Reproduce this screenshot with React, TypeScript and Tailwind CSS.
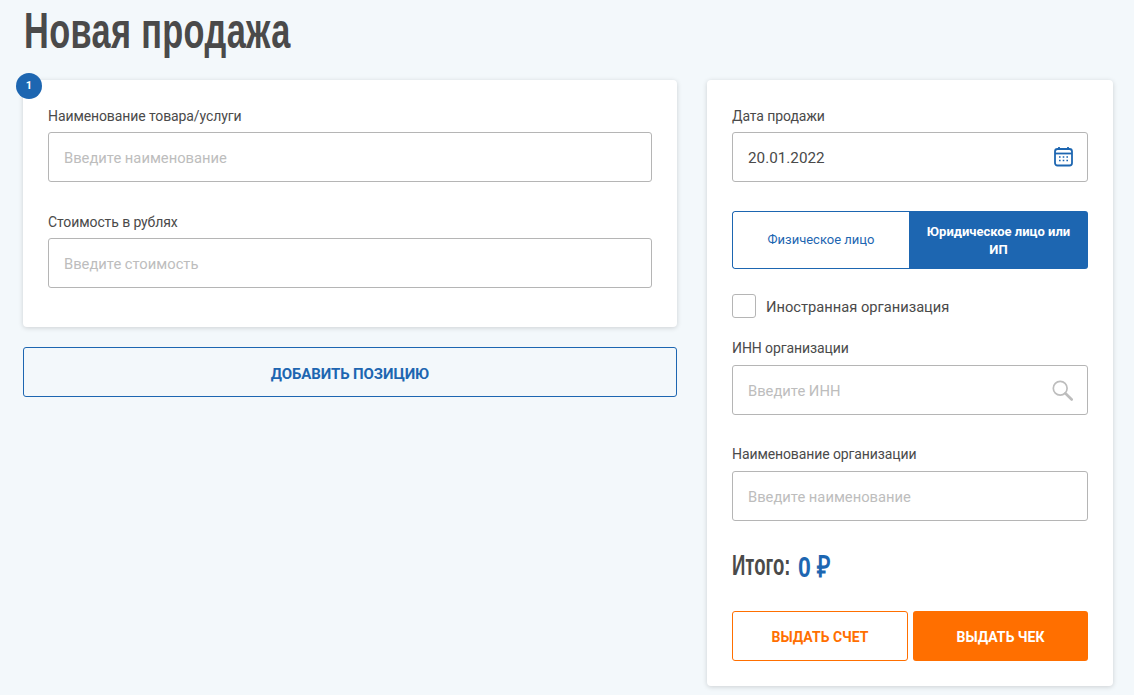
import { ReactNode } from 'react';

const Field = ({ label, children, className = '' }: { label: string; children: ReactNode; className?: string }) => (
  <div className={className}>
    <div className="h-5 mb-[7px] text-[14px] leading-[22px] tracking-[-0.1px] text-[#4a4a4a]">{label}</div>
    {children}
  </div>
);

const Input = ({ placeholder, value, icon }: { placeholder?: string; value?: string; icon?: ReactNode }) => (
  <div className="h-[50px] flex items-center justify-between pl-[15px] pr-[14px] bg-white border border-[#b5b5b5] rounded-[3px] text-[14.75px]">
    {value ? (
      <span className="pt-[2px] text-[#4a4a4a] text-[15.25px]">{value}</span>
    ) : (
      <span className="pt-[2px] text-[#bdbdbd]">{placeholder}</span>
    )}
    {icon}
  </div>
);

const CalendarIcon = () => (
  <svg width="20" height="21" viewBox="0 0 20 21" fill="none" className="mt-[-1px] mr-[-1px]">
    <rect x="1" y="3" width="17" height="16.5" rx="2.5" stroke="#1d66b1" strokeWidth="1.8" />
    <path d="M1 7.5h17" stroke="#1d66b1" strokeWidth="1.8" />
    <path d="M5 1v3M14 1v3" stroke="#1d66b1" strokeWidth="1.8" />
    <path d="M5 11h1.6M8.7 11h1.6M12.4 11h1.6M5 14.5h1.6M8.7 14.5h1.6M12.4 14.5h1.6" stroke="#1d66b1" strokeWidth="1.6" />
  </svg>
);

const SearchIcon = () => (
  <svg width="21" height="21" viewBox="0 0 21 21" fill="none">
    <circle cx="8.2" cy="8.2" r="6.9" stroke="#bdbdbd" strokeWidth="1.7" />
    <path d="M13.3 13.3l6.4 6.2" stroke="#bdbdbd" strokeWidth="2.6" strokeLinecap="round" />
  </svg>
);

export default function App() {
  return (
    <div className="min-h-[695px] bg-[#f3f8fb] font-['Roboto','Noto_Sans',sans-serif] overflow-hidden">
      <div className="h-20 pl-6">
        <h1 className="inline-block origin-left scale-x-[0.687] whitespace-nowrap font-['Liberation_Sans',sans-serif] text-[50px] leading-[62px] font-bold text-[#4a4a4a] tracking-[0.5px]">
          Новая продажа
        </h1>
      </div>

      <div className="flex gap-[30px] pl-[23px]">
        <div className="w-[654px]">
          <div className="relative bg-white rounded-[4px] shadow-[0_1px_5px_rgba(0,0,0,0.16)] pt-[25px] px-[25px] pb-[39px]">
            <div className="absolute left-[-7px] top-[-7px] w-[26px] h-[26px] rounded-full bg-[#1d66b1] text-white text-[11px] font-bold flex items-center justify-center">
              1
            </div>
            <Field label="Наименование товара/услуги">
              <Input placeholder="Введите наименование" />
            </Field>
            <Field label="Стоимость в рублях" className="mt-[29px]">
              <Input placeholder="Введите стоимость" />
            </Field>
          </div>
          <button className="mt-5 w-full h-[50px] pt-[4px] border border-[#1d66b1] rounded-[3px] text-[#1d66b1] text-[15px] tracking-[-0.1px] font-bold">
            ДОБАВИТЬ ПОЗИЦИЮ
          </button>
        </div>

        <div className="w-[406px] h-[606px] bg-white rounded-[4px] shadow-[0_1px_5px_rgba(0,0,0,0.16)] pt-[25px] px-[25px]">
          <Field label="Дата продажи">
            <Input value="20.01.2022" icon={<CalendarIcon />} />
          </Field>

          <div className="mt-[29px] h-[58px] flex rounded-[3px] overflow-hidden text-[13px] leading-[18px]">
            <div className="w-[177px] flex items-center justify-center border border-r-0 border-[#1d66b1] rounded-l-[3px] text-[#1d66b1]">
              Физическое лицо
            </div>
            <div className="flex-1 flex items-center justify-center px-3 pt-[2px] bg-[#1d66b1] text-white font-bold text-center">
              Юридическое лицо или ИП
            </div>
          </div>

          <div className="mt-[25px] flex items-center gap-[10px] h-6 text-[14.7px] text-[#4a4a4a]">
            <div className="w-6 h-6 bg-white border border-[#b5b5b5] rounded-[3px]" />
            <span className="pt-[2px]">Иностранная организация</span>
          </div>

          <Field label="ИНН организации" className="mt-[19px]">
            <div className="mt-[8px]">
              <Input placeholder="Введите ИНН" icon={<SearchIcon />} />
            </div>
          </Field>
          <Field label="Наименование организации" className="mt-[28px]">
            <div className="mt-[8px]">
              <Input placeholder="Введите наименование" />
            </div>
          </Field>

          <div className="mt-[25px] h-[40px] flex items-center font-['Liberation_Sans',sans-serif] font-bold text-[#4a4a4a] whitespace-nowrap">
            <span className="inline-block w-[66px] origin-left scale-x-[0.64] text-[29px]">Итого:</span>
            <span className="inline-block origin-left scale-x-[0.77] text-[30px] text-[#1d66b1]">0 ₽</span>
          </div>

          <div className="mt-[25px] flex gap-[5px]">
            <button className="w-[176px] h-[50px] pt-[2px] border border-[#ff6f00] rounded-[3px] text-[#ff6f00] text-[14px] font-bold">
              ВЫДАТЬ СЧЕТ
            </button>
            <button className="w-[175px] h-[50px] pt-[2px] bg-[#ff6f00] rounded-[3px] text-white text-[14px] font-bold">
              ВЫДАТЬ ЧЕК
            </button>
          </div>
        </div>
      </div>
    </div>
  );
}
